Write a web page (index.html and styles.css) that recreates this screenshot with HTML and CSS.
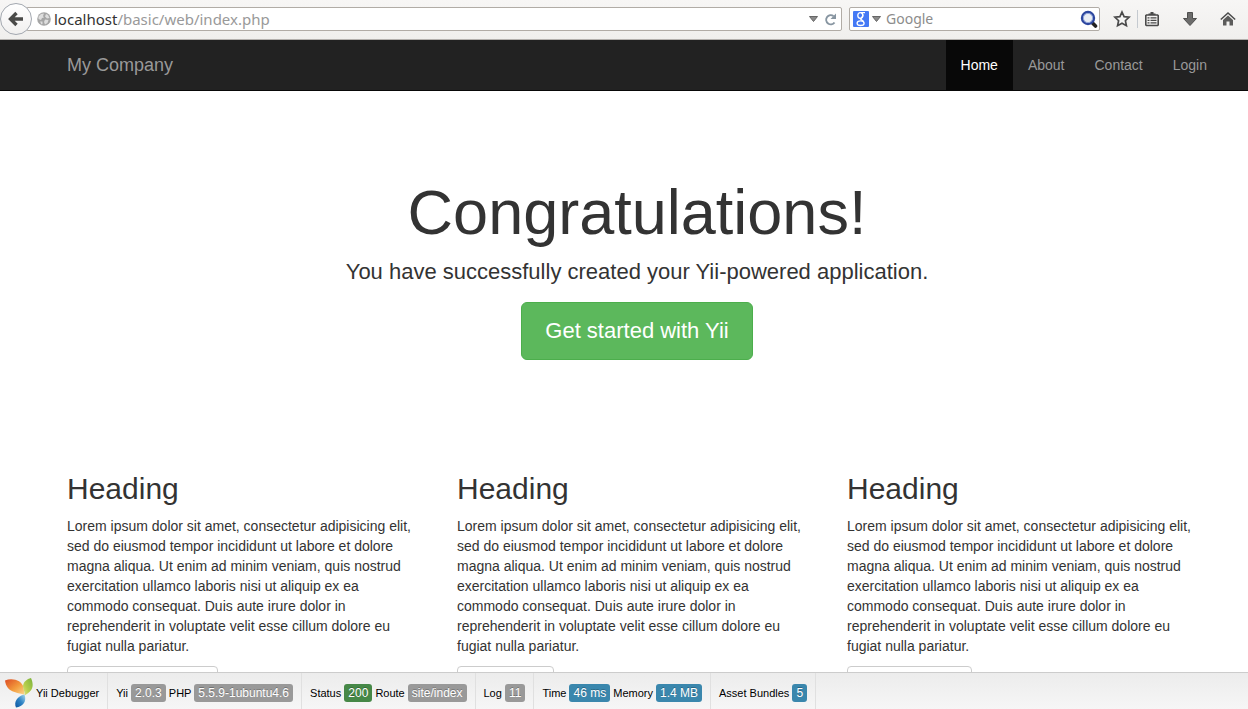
FILE: index.html
```
<!DOCTYPE html>
<html lang="en">
<head>
  <meta charset="UTF-8" />
  <meta name="viewport" content="width=device-width, initial-scale=1.0"/>
  <title>My Yii Application</title>
  <link rel="stylesheet" href="styles.css">
</head>
<body>

<div class="browser-bar">
  <button type="button" class="back-btn" aria-label="Back">
    <svg width="16" height="16" viewBox="0 0 16 16"><path d="M8.5 2 2.500 8l6 6M3.500 8H15" fill="none" stroke="#4a4a48" stroke-width="3.400"/></svg>
  </button>
  <div class="url-box">
    <svg width="14" height="14" viewBox="0 0 14 14">
      <circle cx="7" cy="7" r="6.800" fill="#a5a5a5"/>
      <path d="M1.500 4.500 4 2l3-.5L6 4l1 1.500-2 .5-1 2-2.500-1zM9 2l2 1 1.500 3-2.500.5L8 4.500zM8 7.500l3.500.5-1 3-2.500 1.500-1-2.500zM3 9.500h2.500v2.500l-1 .5z" fill="#dedede"/>
    </svg>
    <div class="url" role="textbox" aria-label="Address" contenteditable="true" spellcheck="false"><span class="host">localhost</span>/basic/web/index.php</div>
    <button type="button" class="icon-btn" aria-label="Show history">
      <svg width="9" height="6" viewBox="0 0 9 6"><path d="M.5.5h8l-4 5z" fill="#8a8a8a" stroke="#666"/></svg>
    </button>
    <button type="button" class="icon-btn reload" aria-label="Reload">
      <svg width="13" height="13" viewBox="0 0 13 13"><path d="M10.500 9.500A4.600 4.600 0 1 1 9.500 3" fill="none" stroke="#8795a1" stroke-width="2"/><path d="M12 .5V6H6.500z" fill="#8795a1"/></svg>
    </button>
  </div>
  <form class="search-box">
    <svg width="16" height="16" viewBox="0 0 16 16">
      <rect width="16" height="16" rx="1" fill="#4479f5"/>
      <g fill="none" stroke="#fff" stroke-width="1.300">
        <ellipse cx="7.300" cy="4.500" rx="2.500" ry="2.800"/>
        <ellipse cx="7.600" cy="12.200" rx="3.500" ry="2.300"/>
        <path d="M8 1.600h4M9 2.200c1.600 2 .9 3.500-.8 4.700-1 .8-.6 1.500.6 2.200l1.800 1.500"/>
      </g>
    </svg>
    <button type="button" class="icon-btn engine" aria-label="Search engine">
      <svg width="9" height="6" viewBox="0 0 9 6"><path d="M.5.5h8l-4 5z" fill="#8a8a8a" stroke="#666"/></svg>
    </button>
    <input type="text" class="search-input" placeholder="Google" aria-label="Search">
    <button type="submit" class="icon-btn" aria-label="Go">
      <svg width="18" height="18" viewBox="0 0 18 18">
        <path d="m12 12.500 3.500 3.500" stroke="#222" stroke-width="3.600" stroke-linecap="round"/>
        <circle cx="8" cy="8" r="6" fill="#e9edf3" stroke="#2d479f" stroke-width="2.400"/>
        <circle cx="8" cy="8" r="4.600" fill="none" stroke="#94a9dc"/>
      </svg>
    </button>
  </form>
  <div class="browser-tools">
    <button type="button" class="icon-btn" aria-label="Bookmark">
      <svg width="18" height="18" viewBox="0 0 18 18"><path d="m9 2 2.100 4.600 5 .6-3.700 3.500 1 5L9 13.200l-4.400 2.500 1-5L1.900 7.200l5-.6z" fill="#f5f5f4" stroke="#4a4a4a" stroke-width="1.700"/></svg>
    </button>
    <span class="divider"></span>
    <button type="button" class="icon-btn list" aria-label="Bookmarks menu">
      <svg width="16" height="16" viewBox="0 0 16 16"><path d="M2.500 4h11l.7.700v9.100l-.7.700h-11l-.7-.700V4.700z" fill="none" stroke="#4a4a4a" stroke-width="1.600"/><path d="M4.500 4V2.500h2V1h3v1.500h2V4z" fill="#4a4a4a"/><path d="M3.500 6.800h2M6.500 6.800h6M3.500 9.300h2M6.500 9.300h6M3.500 11.800h2M6.500 11.800h6" stroke="#4a4a4a" stroke-width="1.200"/></svg>
    </button>
    <button type="button" class="icon-btn" aria-label="Downloads">
      <svg width="16" height="16" viewBox="0 0 16 16"><path d="M5.500 1.500h5v6h4L8 14.500 1.500 7.500h4z" fill="#6c6c6b" stroke="#4f4f4e"/></svg>
    </button>
    <button type="button" class="icon-btn" aria-label="Home page">
      <svg width="16" height="16" viewBox="0 0 16 16"><path d="M.8 8.500 8 2l7.200 6.500" fill="none" stroke="#4a4a4a" stroke-width="1.500"/><path d="M3 9l5-4.500L13 9v5.500H9.500v-4h-3v4H3z" fill="#5c5c5b"/></svg>
    </button>
  </div>
</div>

<nav class="navbar">
  <a class="navbar-brand" href="#">My Company</a>
  <ul class="navbar-nav">
    <li class="active"><a href="#">Home</a></li>
    <li><a href="#">About</a></li>
    <li><a href="#">Contact</a></li>
    <li><a href="#">Login</a></li>
  </ul>
</nav>

<main class="container">
  <div class="jumbotron">
    <h1>Congratulations!</h1>
    <p class="lead">You have successfully created your Yii-powered application.</p>
    <p><a class="btn btn-success" href="#">Get started with Yii</a></p>
  </div>

  <div class="row">
    <div class="col">
      <h2>Heading</h2>
      <p>Lorem ipsum dolor sit amet, consectetur adipisicing elit, sed do eiusmod tempor incididunt ut labore et dolore magna aliqua. Ut enim ad minim veniam, quis nostrud exercitation ullamco laboris nisi ut aliquip ex ea commodo consequat. Duis aute irure dolor in reprehenderit in voluptate velit esse cillum dolore eu fugiat nulla pariatur.</p>
      <p><a class="btn btn-default" href="#">Yii Documentation &raquo;</a></p>
    </div>
    <div class="col">
      <h2>Heading</h2>
      <p>Lorem ipsum dolor sit amet, consectetur adipisicing elit, sed do eiusmod tempor incididunt ut labore et dolore magna aliqua. Ut enim ad minim veniam, quis nostrud exercitation ullamco laboris nisi ut aliquip ex ea commodo consequat. Duis aute irure dolor in reprehenderit in voluptate velit esse cillum dolore eu fugiat nulla pariatur.</p>
      <p><a class="btn btn-default" href="#">Yii Forum &raquo;</a></p>
    </div>
    <div class="col">
      <h2>Heading</h2>
      <p>Lorem ipsum dolor sit amet, consectetur adipisicing elit, sed do eiusmod tempor incididunt ut labore et dolore magna aliqua. Ut enim ad minim veniam, quis nostrud exercitation ullamco laboris nisi ut aliquip ex ea commodo consequat. Duis aute irure dolor in reprehenderit in voluptate velit esse cillum dolore eu fugiat nulla pariatur.</p>
      <p><a class="btn btn-default" href="#">Yii Extensions &raquo;</a></p>
    </div>
  </div>
</main>

<div class="debug-toolbar">
  <div class="debug-block debug-title">
    <a href="#">
      <svg width="28" height="30" viewBox="0 0 28 30">
        <defs>
          <linearGradient id="leafOrange" x1="0" y1="0" x2="1" y2="1"><stop offset="0" stop-color="#dc4b24"/><stop offset=".55" stop-color="#f29a3c"/><stop offset="1" stop-color="#fbd58a"/></linearGradient>
          <linearGradient id="leafGreen" x1="1" y1="0" x2="0" y2="1"><stop offset="0" stop-color="#78b23c"/><stop offset=".6" stop-color="#b7ce4b"/><stop offset="1" stop-color="#e6e38a"/></linearGradient>
          <linearGradient id="leafBlue" x1="0" y1="1" x2="1" y2="0"><stop offset="0" stop-color="#0a56a0"/><stop offset=".5" stop-color="#2f83c4"/><stop offset="1" stop-color="#a5d8ee"/></linearGradient>
        </defs>
        <path d="M0 2.500C7-.5 17 2 18.500 9.500c.5 2.500.7 4.500.5 7C12 14.500 1.500 14.500 0 2.500z" fill="url(#leafOrange)"/>
        <path d="M26 0c3 7 2.500 13-6.500 17.500C20 13 18 11 18 8.500 18 4 22 1 26 0z" fill="url(#leafGreen)"/>
        <path d="M19.500 16.500c2.500 7-1.500 12-8.500 13C8.500 24.500 12 18 19.500 16.500z" fill="url(#leafBlue)"/>
      </svg>
      Yii Debugger
    </a>
  </div>
  <div class="debug-block">
    <a href="#">Yii <span class="label">2.0.3</span> PHP <span class="label">5.5.9-1ubuntu4.6</span></a>
  </div>
  <div class="debug-block">
    <a href="#">Status <span class="label label-success">200</span> Route <span class="label">site/index</span></a>
  </div>
  <div class="debug-block">
    <a href="#">Log <span class="label">11</span></a>
  </div>
  <div class="debug-block">
    <a href="#">Time <span class="label label-info">46 ms</span> Memory <span class="label label-info">1.4 MB</span></a>
  </div>
  <div class="debug-block">
    <a href="#">Asset Bundles <span class="label label-info">5</span></a>
  </div>
</div>

</body>
</html>
```
FILE: styles.css
```
* {
  box-sizing: border-box;
}

body {
  display: flex;
  flex-direction: column;
  height: 100vh;
  margin: 0;
  font-family: "Liberation Sans", Helvetica, Arial, sans-serif;
  font-size: 14px;
  line-height: 20px;
  color: #333;
  background: #fff;
}

a {
  text-decoration: none;
}

svg {
  display: block;
  flex: none;
}

/* Browser bar */
.browser-bar {
  display: flex;
  flex: none;
  align-items: center;
  height: 40px;
  padding: 0 12px 1px 0;
  background: linear-gradient(#f7f6f5, #f0efed);
  border-bottom: 1px solid #b3b0ad;
  font-family: "Noto Sans", "Open Sans", sans-serif;
}

.back-btn {
  z-index: 1;
  display: flex;
  flex: none;
  align-items: center;
  justify-content: center;
  width: 32px;
  height: 32px;
  margin-right: -6px;
  padding: 0;
  border: 1px solid #a3a8b0;
  border-radius: 50%;
  background: linear-gradient(#fff, #f1f0ef);
}

.url-box,
.search-box {
  display: flex;
  align-items: center;
  height: 24px;
  background: #fff;
  border: 1px solid #b1aca6;
  border-radius: 2px;
}

.url-box {
  flex: 1;
  padding: 0 4px 0 10px;
}

.url {
  flex: 1;
  margin-left: 3px;
  color: #999;
  font-size: 15px;
  white-space: nowrap;
  outline: none;
}

.host {
  color: #333;
}

.icon-btn {
  flex: none;
  padding: 0;
  border: none;
  background: none;
}

.reload {
  margin-left: 6px;
}

.search-box {
  width: 251px;
  margin-left: 7px;
  padding: 0 1px 0 3px;
}

.engine {
  margin: 0 5px 0 3px;
}

.search-input {
  flex: 1;
  min-width: 0;
  padding: 0;
  border: none;
  outline: none;
  background: none;
  font-family: inherit;
  font-size: 14px;
  line-height: 20px;
}

.search-input::placeholder {
  color: #8c8c8c;
}

.browser-tools {
  display: flex;
  align-items: center;
  gap: 22px;
  margin-left: 13px;
}

.divider {
  width: 1px;
  height: 18px;
  margin: 0 -16px;
  background: #c5cad0;
}

/* Navbar */
.navbar {
  display: flex;
  flex: none;
  justify-content: space-between;
  padding: 0 26px 0 52px;
  background: #222;
  border-bottom: 1px solid #080808;
}

.navbar a {
  display: block;
  padding: 15px;
  color: #999;
}

.navbar .navbar-brand {
  font-size: 18px;
}

.navbar-nav {
  display: flex;
  margin: 0;
  padding: 0;
  list-style: none;
}

.navbar-nav .active a {
  color: #fff;
  background: #080808;
}

/* Content */
.container {
  flex: 1;
  min-height: 0;
  padding: 19px 41px 0 67px;
  overflow-y: auto;
  scrollbar-width: none;
}

.jumbotron {
  padding: 48px 0;
  text-align: center;
}

.jumbotron h1 {
  margin: 20px 0 10px;
  font-size: 63px;
  font-weight: normal;
  line-height: 69px;
}

.jumbotron p {
  margin: 0 0 15px;
  font-size: 22px;
  line-height: 30px;
}

.row {
  display: grid;
  grid-template-columns: repeat(3, 1fr);
  gap: 30px;
  padding-top: 29px;
}

.col h2 {
  margin: 20px 0 10px;
  font-size: 30px;
  font-weight: normal;
  line-height: 34px;
}

.col p {
  margin: 0 0 10px;
  padding-right: 8px;
}

.btn {
  display: inline-block;
  border: 1px solid transparent;
}

.btn-success {
  padding: 13px 23px;
  color: #fff;
  background: #5cb85c;
  border-color: #4cae4c;
  border-radius: 6px;
}

.btn-default {
  padding: 6px 12px;
  color: #333;
  background: #fff;
  border-color: #ccc;
  border-radius: 4px;
}

/* Debug toolbar */
.debug-toolbar {
  display: flex;
  flex: none;
  height: 37px;
  background: linear-gradient(#ececec, #f6f6f6);
  border-top: 1px solid #ccc;
  font-size: 11px;
}

.debug-block {
  display: flex;
  align-items: center;
  padding: 4px 8px 0;
  border-right: 1px solid #e0e0e0;
  white-space: nowrap;
}

.debug-block a {
  color: #000;
}

.debug-title {
  padding-left: 5px;
}

.debug-title a {
  display: flex;
  align-items: center;
  gap: 3px;
}

.label {
  display: inline-block;
  padding: 1px 4px;
  color: #fff;
  background: #999;
  border-radius: 3px;
  font-size: 12px;
  line-height: 16px;
  text-shadow: 0 -1px 0 rgba(0, 0, 0, 0.25);
}

.label-success {
  background: #468847;
}

.label-info {
  background: #3a87ad;
}
```
